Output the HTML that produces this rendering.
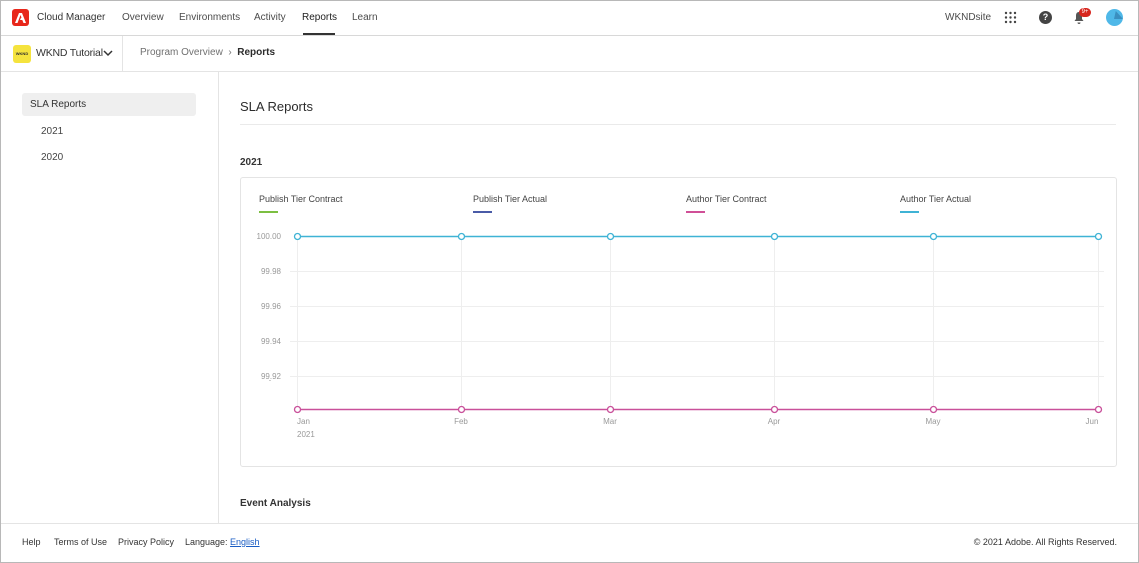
<!DOCTYPE html>
<html><head><style>
*{box-sizing:border-box;margin:0;padding:0}
body{width:1139px;height:563px;overflow:hidden;font-family:"Liberation Sans",sans-serif;color:#2c2c2c;background:#fff;position:relative}
.frame{position:absolute;inset:0;border:1px solid #b8b8b8}
.t{position:absolute;white-space:nowrap}
.top{position:absolute;left:0;top:0;width:1139px;height:36px;border-bottom:1px solid #d8d8d8}
.sub{position:absolute;left:0;top:36px;width:1139px;height:36px;border-bottom:1px solid #e4e4e4}
.nav{font-size:10px;color:#4b4b4b;top:12px}
</style></head><body>
<div class="top">
 <div style="position:absolute;left:12px;top:9px;width:17px;height:17px;background:#e8271b;border-radius:3px"></div>
 <svg style="position:absolute;left:14px;top:11px" width="13" height="13" viewBox="0 0 13 13"><path d="M5 2h3l4 10H9.5L8.3 9H6l1-2.3h.6L6.5 4 3.5 12H1z" fill="#fff"/></svg>
 <div class="t nav" style="left:37px;color:#333">Cloud Manager</div>
 <div class="t nav" style="left:122px">Overview</div>
 <div class="t nav" style="left:179px">Environments</div>
 <div class="t nav" style="left:254px">Activity</div>
 <div class="t nav" style="left:302px;color:#222">Reports</div>
 <div style="position:absolute;left:303px;top:33px;width:32px;height:2px;background:#333"></div>
 <div class="t nav" style="left:352px">Learn</div>
 <div class="t nav" style="left:945px;font-size:10px">WKNDsite</div>
 <svg style="position:absolute;left:1004px;top:11px" width="13" height="13"><g fill="#444"><circle cx="2" cy="2" r="1.2"/><circle cx="6.5" cy="2" r="1.2"/><circle cx="11" cy="2" r="1.2"/><circle cx="2" cy="6.5" r="1.2"/><circle cx="6.5" cy="6.5" r="1.2"/><circle cx="11" cy="6.5" r="1.2"/><circle cx="2" cy="11" r="1.2"/><circle cx="6.5" cy="11" r="1.2"/><circle cx="11" cy="11" r="1.2"/></g></svg>
 <div style="position:absolute;left:1039px;top:11px;width:13px;height:13px;border-radius:50%;background:#444;color:#fff;font-size:9px;font-weight:bold;text-align:center;line-height:13px">?</div>
 <svg style="position:absolute;left:1073px;top:11px" width="12" height="14"><path d="M6 1C3.5 1 3 3 3 5v3L1.5 10h9L9 8V5C9 3 8.5 1 6 1zM4.5 11.5a1.5 1.5 0 003 0z" fill="#555"/></svg>
 <div style="position:absolute;left:1079px;top:8px;width:12px;height:9px;border-radius:5px;background:#d7261e;color:#fff;font-size:6px;text-align:center;line-height:9px">9+</div>
 <div style="position:absolute;left:1106px;top:9px;width:17px;height:17px;border-radius:50%;background:#4fb8e8;overflow:hidden"><div style="position:absolute;left:8px;top:2px;width:9px;height:8px;background:#3a8fc0;clip-path:polygon(20% 0,100% 100%,0 100%)"></div></div>
</div>
<div class="sub">
 <div style="position:absolute;left:13px;top:9px;width:18px;height:18px;background:#f5e33d;border-radius:3px;font-size:4px;text-align:center;line-height:18px;font-weight:bold">WKND</div>
 <div class="t" style="left:36px;top:11px;font-size:10.5px;color:#333;letter-spacing:-0.2px">WKND Tutorial</div>
 <svg style="position:absolute;left:103px;top:14px" width="10" height="7"><path d="M1 1l4 4 4-4" stroke="#333" stroke-width="1.5" fill="none"/></svg>
 <div style="position:absolute;left:122px;top:0;width:1px;height:35px;background:#e4e4e4"></div>
 <div class="t" style="left:140px;top:11px;font-size:10px;color:#707070">Program Overview &nbsp;›&nbsp; <b style="color:#2c2c2c">Reports</b></div>
</div>
<div style="position:absolute;left:218px;top:72px;width:1px;height:452px;background:#e4e4e4"></div>
<div style="position:absolute;left:22px;top:93px;width:174px;height:23px;background:#efefef;border-radius:3px"></div>
<div class="t" style="left:30px;top:99px;font-size:10px;color:#333">SLA Reports</div>
<div class="t" style="left:41px;top:126px;font-size:10px;color:#444">2021</div>
<div class="t" style="left:41px;top:152px;font-size:10px;color:#444">2020</div>
<div class="t" style="left:240px;top:99px;font-size:13px;color:#2c2c2c">SLA Reports</div>
<div style="position:absolute;left:240px;top:124px;width:876px;height:1px;background:#eaeaea"></div>
<div class="t" style="left:240px;top:157px;font-size:10px;font-weight:bold;color:#333">2021</div>
<div style="position:absolute;left:240px;top:177px;width:877px;height:290px;border:1px solid #e4e4e4;border-radius:3px"></div>
<div class="t" style="left:259px;top:194px;font-size:9px;color:#444">Publish Tier Contract</div>
<div style="position:absolute;left:259px;top:211px;width:19px;height:2px;background:#7cbf41"></div>
<div class="t" style="left:473px;top:194px;font-size:9px;color:#444">Publish Tier Actual</div>
<div style="position:absolute;left:473px;top:211px;width:19px;height:2px;background:#4a5ba7"></div>
<div class="t" style="left:686px;top:194px;font-size:9px;color:#444">Author Tier Contract</div>
<div style="position:absolute;left:686px;top:211px;width:19px;height:2px;background:#d04f97"></div>
<div class="t" style="left:900px;top:194px;font-size:9px;color:#444">Author Tier Actual</div>
<div style="position:absolute;left:900px;top:211px;width:19px;height:2px;background:#3fb3d5"></div>
<svg style="position:absolute;left:0;top:0" width="1139" height="563" font-family="Liberation Sans" font-size="8" fill="#999">
 <g stroke="#eeeeee" stroke-width="1">
  <line x1="290" y1="271.5" x2="1104" y2="271.5"/><line x1="290" y1="306.5" x2="1104" y2="306.5"/><line x1="290" y1="341.5" x2="1104" y2="341.5"/><line x1="290" y1="376.5" x2="1104" y2="376.5"/>
  <line x1="297.5" y1="236" x2="297.5" y2="409"/><line x1="461.5" y1="236" x2="461.5" y2="409"/><line x1="610.5" y1="236" x2="610.5" y2="409"/><line x1="774.5" y1="236" x2="774.5" y2="409"/><line x1="933.5" y1="236" x2="933.5" y2="409"/><line x1="1098.5" y1="236" x2="1098.5" y2="409"/>
 </g>
 <text x="281" y="239" text-anchor="end">100.00</text><text x="281" y="274" text-anchor="end">99.98</text><text x="281" y="309" text-anchor="end">99.96</text><text x="281" y="344" text-anchor="end">99.94</text><text x="281" y="379" text-anchor="end">99.92</text>
 <text x="269" y="385" font-size="6">ˇ</text>
 <text x="297" y="424" text-anchor="start">Jan</text><text x="297" y="437">2021</text>
 <text x="461" y="424" text-anchor="middle">Feb</text><text x="610" y="424" text-anchor="middle">Mar</text><text x="774" y="424" text-anchor="middle">Apr</text><text x="933" y="424" text-anchor="middle">May</text><text x="1092" y="424" text-anchor="middle">Jun</text>
 <line x1="297" y1="236.5" x2="1098" y2="236.5" stroke="#3fb3d5" stroke-width="1.5"/>
 <line x1="297" y1="409.5" x2="1098" y2="409.5" stroke="#c9509a" stroke-width="1.5"/>
 <g fill="#fff" stroke="#3fb3d5" stroke-width="1.3"><circle cx="297.5" cy="236.5" r="3"/><circle cx="461.5" cy="236.5" r="3"/><circle cx="610.5" cy="236.5" r="3"/><circle cx="774.5" cy="236.5" r="3"/><circle cx="933.5" cy="236.5" r="3"/><circle cx="1098.5" cy="236.5" r="3"/></g>
 <g fill="#fff" stroke="#c9509a" stroke-width="1.3"><circle cx="297.5" cy="409.5" r="3"/><circle cx="461.5" cy="409.5" r="3"/><circle cx="610.5" cy="409.5" r="3"/><circle cx="774.5" cy="409.5" r="3"/><circle cx="933.5" cy="409.5" r="3"/><circle cx="1098.5" cy="409.5" r="3"/></g>
</svg>
<div class="t" style="left:240px;top:498px;font-size:10px;font-weight:bold;color:#333">Event Analysis</div>
<div style="position:absolute;left:0;top:523px;width:1139px;height:1px;background:#e4e4e4"></div>
<div class="t" style="left:22px;top:537px;font-size:9px;color:#333">Help</div>
<div class="t" style="left:54px;top:537px;font-size:9px;color:#333">Terms of Use</div>
<div class="t" style="left:118px;top:537px;font-size:9px;color:#333">Privacy Policy</div>
<div class="t" style="left:185px;top:537px;font-size:9px;color:#333">Language: <u style="color:#1a5dc4">English</u></div>
<div class="t" style="right:22px;top:537px;font-size:9px;color:#333">© 2021 Adobe. All Rights Reserved.</div>
<div class="frame"></div>
</body></html>
